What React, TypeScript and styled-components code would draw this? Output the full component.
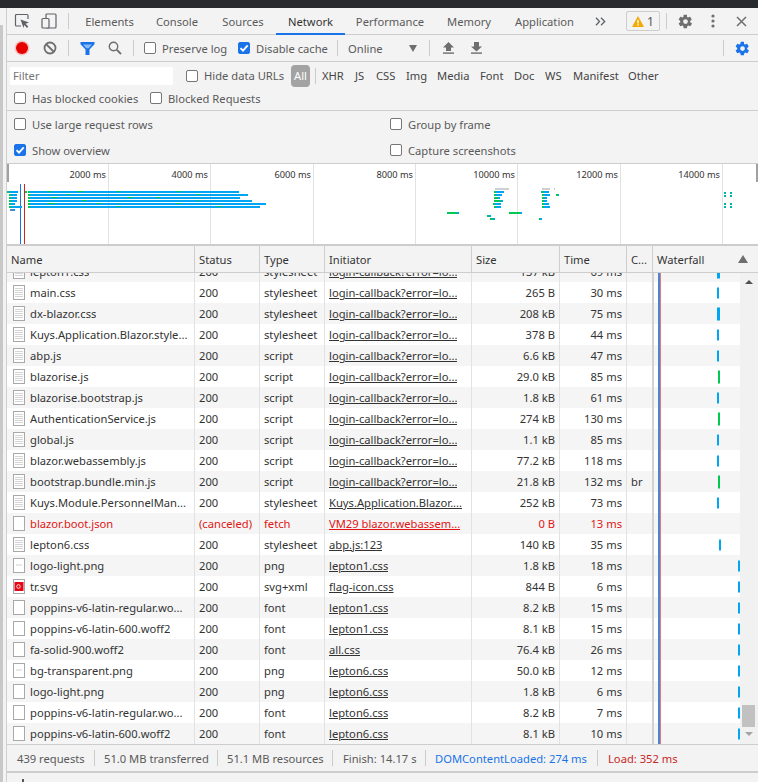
import React from "react";
import styled, { createGlobalStyle } from "styled-components";

const Global = createGlobalStyle`
  html, body { margin: 0; padding: 0; background: #f3f3f3; }
  body { font-family: "Noto Sans", "Open Sans", sans-serif; font-size: 11.2px; color: #333; overflow: hidden; }
  * { box-sizing: border-box; }
`;

const Shell = styled.div`
  width: 758px; height: 782px; display: flex; flex-direction: column; overflow: hidden; background: #f3f3f3;
`;
const DarkBar = styled.div`height: 8px; background: #292a2d; flex: none;`;
const Body = styled.div`flex: 1; display: flex; min-height: 0;`;
const Gutter = styled.div`
  width: 7px; flex: none; background: #f3f3f3; border-right: 1px solid #cfcfcf; padding-top: 17px;
`;
const GutterThumb = styled.div`width: 3px; height: 100%; background: #c8c8c8;`;
const Panel = styled.div`flex: 1; min-width: 0; display: flex; flex-direction: column;`;

const TabBar = styled.div`
  height: 27px; flex: none; display: flex; align-items: stretch; border-bottom: 1px solid #cdcdcd; padding-left: 5px;
`;
const IconSlot = styled.div<{ $w: number }>`
  width: ${p => p.$w}px; flex: none; display: flex; align-items: center; justify-content: center;
`;
const Sep = styled.div<{ $l?: number; $r?: number }>`
  width: 1px; height: 16px; background: #cbcbcb; align-self: center; flex: none;
  margin-left: ${p => p.$l ?? 0}px; margin-right: ${p => p.$r ?? 0}px;
`;
const Tab = styled.div<{ $on?: boolean; $w: number }>`
  width: ${p => p.$w}px; flex: none; display: flex; align-items: center; justify-content: center;
  color: ${p => (p.$on ? "#333" : "#5a5a5a")}; height: 27px; padding-top: 1px;
  border-bottom: 2px solid ${p => (p.$on ? "#1a73e8" : "transparent")};
`;
const Badge = styled.div`
  width: 34px; height: 20px; border: 1px solid #cdcdcd; border-radius: 2px; display: flex; align-items: center;
  justify-content: center; gap: 3px; align-self: center; flex: none; color: #555; font-size: 12px; margin-left: 12px;
`;
const Toolbar = styled.div`
  height: 27px; flex: none; display: flex; align-items: center; border-bottom: 1px solid #cdcdcd; padding: 0 6px 0 5px;
`;
const Check = styled.span<{ $on?: boolean }>`
  width: 12px; height: 12px; border-radius: 2px; flex: none; display: inline-flex; align-items: center; justify-content: center;
  background: ${p => (p.$on ? "#1a73e8" : "#fff")}; border: 1px solid ${p => (p.$on ? "#1a73e8" : "#767676")};
`;
const CheckLabel = styled.label<{ $w?: number }>`
  display: inline-flex; align-items: center; gap: 6px; color: #5a5a5a; white-space: nowrap; flex: none;
  width: ${p => (p.$w ? `${p.$w}px` : "auto")};
`;
const Spacer = styled.div`flex: 1;`;
const Select = styled.div`
  width: 69px; flex: none; display: flex; align-items: center; justify-content: space-between; color: #5a5a5a;
`;
const Caret = styled.span`
  width: 0; height: 0; border-left: 4px solid transparent; border-right: 4px solid transparent; border-top: 7px solid #6e6e6e;
`;
const FilterBar = styled.div`
  height: 49px; flex: none; border-bottom: 1px solid #cdcdcd; display: flex; flex-direction: column;
`;
const FilterTop = styled.div`height: 27px; display: flex; align-items: center; padding-left: 3px;`;
const FilterInput = styled.div`
  width: 163px; height: 18px; background: #fff; color: #757575; padding-left: 3px; line-height: 18px; flex: none; margin-right: 13px;
`;
const AllPill = styled.div`
  width: 19px; height: 22px; border-radius: 4px; background: #a3a3a3; color: #fff; display: flex; align-items: center; justify-content: center;
  margin-left: 6px; flex: none;
`;
const TypeLink = styled.span<{ $w: number }>`
  width: ${p => p.$w}px; flex: none; color: #444; white-space: nowrap;
`;
const FilterBottom = styled.div`height: 18px; display: flex; align-items: center; padding-left: 7px; gap: 10px;`;
const SettingsPane = styled.div`
  height: 53px; flex: none; border-bottom: 1px solid #cdcdcd; display: grid; grid-template-columns: 376px 1fr; grid-auto-rows: 26px;
  align-items: center; padding: 0 0 0 7px;
`;
const Overview = styled.div`
  height: 82px; flex: none; background: #fff; position: relative; border-bottom: 2px solid #cdcdcd;
`;
const OverviewSvg = styled.svg`display: block; position: absolute; inset: 0;`;
const TickLabel = styled.span<{ $r: number }>`
  position: absolute; top: 4px; right: ${p => p.$r}px; font-size: 9.2px; color: #333; white-space: nowrap;
`;
const EdgeHandle = styled.div`position: absolute; left: 0; top: 0; width: 2px; height: 18px; background: #a0a0a0;`;
const EdgeHandleRight = styled.div`position: absolute; right: 0; top: 0; width: 2px; height: 18px; background: #a0a0a0;`;

const COLS = "188px 65px 65px 147px 88px 67px 26px 1fr";
const HeaderRow = styled.div`
  height: 27px; flex: none; display: grid; grid-template-columns: ${COLS}; background: #f3f3f3; border-bottom: 1px solid #cdcdcd;
`;
const HeadCell = styled.div`
  display: flex; align-items: center; padding-left: 4px; border-right: 1px solid #cdcdcd; color: #333; justify-content: space-between;
  &:last-child { border-right: none; padding-right: 10px; }
`;
const SortUp = styled.span`
  width: 0; height: 0; border-left: 5px solid transparent; border-right: 5px solid transparent; border-bottom: 8px solid #6e6e6e;
`;
const TableWrap = styled.div`flex: 1; min-height: 0; position: relative; overflow: hidden; display: flex;`;
const Rows = styled.div`flex: 1; min-width: 0; margin-top: -12px;`;
const Row = styled.div<{ $alt: boolean; $err?: boolean }>`
  height: 21px; display: grid; grid-template-columns: 188px 65px 65px 147px 88px 67px 26px 1fr;
  background: ${p => (p.$alt ? "#f5f5f5" : "#fff")}; color: ${p => (p.$err ? "#e01515" : "#333")};
`;
const Cell = styled.div<{ $right?: boolean }>`
  display: flex; align-items: center; padding: 0 4px; border-right: 1px solid #e2e2e2; white-space: nowrap; overflow: hidden;
  justify-content: ${p => (p.$right ? "flex-end" : "flex-start")}; min-width: 0;
`;
const NameCell = styled(Cell)`gap: 5px; padding-left: 6px; padding-right: 2px;`;
const NameText = styled.span`overflow: hidden; white-space: nowrap;`;
const Link = styled.span`text-decoration: underline; overflow: hidden; white-space: nowrap;`;
const WaterCell = styled.div`position: relative; min-width: 0;`;
const WaterBar = styled.div`position: absolute; top: 50%; transform: translateY(-50%);`;
const GridEdge = styled.div`
  position: absolute; top: 0; bottom: 0; left: 645px; width: 2px; background: #d2d2d2;
`;
const TimeLines = styled.div`
  position: absolute; top: 0; bottom: 0; left: 651px; width: 3px; display: flex; pointer-events: none;
`;
const BlueLine = styled.div`width: 2px; background: #4e83cd;`;
const RedLine = styled.div`width: 1px; background: #e27b7b;`;
const Scrollbar = styled.div`
  width: 18px; flex: none; background: #f1f1f1; display: flex; flex-direction: column; align-items: center; justify-content: space-between; position: relative;
  padding: 7px 0 8px;
`;
const ScrollThumb = styled.div`
  position: absolute; left: 2px; width: 13px; top: 432px; height: 22px; background: #c1c1c1;
`;
const ArrowUp = styled.span`
  width: 0; height: 0; border-left: 4px solid transparent; border-right: 4px solid transparent; border-bottom: 4px solid #505050;
`;
const ArrowDown = styled.span`
  width: 0; height: 0; border-left: 4px solid transparent; border-right: 4px solid transparent; border-top: 4px solid #a3a3a3;
`;
const StatusBar = styled.div`
  height: 29px; flex: none; display: flex; align-items: center; border-top: 1px solid #cdcdcd; border-bottom: 2px solid #cdcdcd; padding-left: 10px;
`;
const StatusItem = styled.span<{ $c?: string; $w: number }>`
  white-space: nowrap; flex: none; width: ${p => p.$w}px; color: ${p => p.$c ?? "#5a5a5a"};
`;
const Drawer = styled.div`height: 9px; flex: none; padding: 6px 0 0 15px;`;
const DrawerDot = styled.div`width: 2px; height: 3px; background: #555;`;

const Inspect = () => (
  <svg width="16" height="16" viewBox="0 0 16 16" fill="none">
    <path d="M7 13H2.500a1 1 0 0 1-1-1V2.500a1 1 0 0 1 1-1H13a1 1 0 0 1 1 1V6" stroke="#5f6368" strokeWidth="1.200" />
    <path d="M6.500 6.500l8.500 3-3.400 1.200 2.700 2.900-1.300 1.300-2.700-2.900L9.500 15z" fill="#5f6368" />
  </svg>
);
const Device = () => (
  <svg width="16" height="16" viewBox="0 0 16 16" fill="none">
    <rect x="5" y="1" width="10" height="14" rx="1" stroke="#5f6368" strokeWidth="1.200" />
    <rect x="1" y="5.500" width="7" height="9.500" rx="1" fill="#f3f3f3" stroke="#5f6368" strokeWidth="1.200" />
  </svg>
);
const Record = () => (
  <svg width="16" height="16" viewBox="0 0 16 16">
    <circle cx="8" cy="8" r="7.600" fill="#f3c6c6" />
    <circle cx="8" cy="8" r="6" fill="#e60000" />
  </svg>
);
const Clear = () => (
  <svg width="14" height="14" viewBox="0 0 14 14" fill="none">
    <circle cx="7" cy="7" r="5.500" stroke="#6e6e6e" strokeWidth="1.800" />
    <path d="M3 3l8 8" stroke="#6e6e6e" strokeWidth="1.800" />
  </svg>
);
const Funnel = () => (
  <svg width="15" height="13" viewBox="0 0 15 13">
    <path d="M.5 0h14v2.300L9.500 7.500V13h-4V7.500L.5 2.300z" fill="#1a73e8" />
    <path d="M3 2.600h9L8.600 6.200H6.400z" fill="#8cbcf5" />
  </svg>
);
const Search = () => (
  <svg width="14" height="14" viewBox="0 0 14 14" fill="none">
    <circle cx="5.500" cy="5.500" r="4.200" stroke="#6e6e6e" strokeWidth="1.400" />
    <path d="M8.600 8.600L13 13" stroke="#6e6e6e" strokeWidth="1.800" />
  </svg>
);
const Upload = () => (
  <svg width="11" height="12" viewBox="0 0 11 12">
    <path d="M5.500 0L11 5.500H8V9H3V5.500H0z" fill="#6e6e6e" />
    <rect y="10.400" width="11" height="1.400" fill="#6e6e6e" />
  </svg>
);
const Download = () => (
  <svg width="11" height="12" viewBox="0 0 11 12">
    <path d="M3 0h5v4.500h3L5.500 9.500 0 4.500h3z" fill="#6e6e6e" />
    <rect y="10.400" width="11" height="1.400" fill="#6e6e6e" />
  </svg>
);
const Gear = ({ c }: { c: string }) => (
  <svg width="15" height="15" viewBox="0 0 24 24">
    <path
      fill={c}
      fillRule="evenodd"
      d="M19.400 13c.1-.3.1-.7.1-1s0-.7-.1-1l2.300-1.800c.2-.2.3-.4.1-.7l-2.200-3.800c-.1-.2-.4-.3-.7-.2l-2.700 1.100c-.6-.4-1.200-.8-1.800-1L14.400 1.700c0-.3-.3-.5-.5-.5H9.500c-.3 0-.5.2-.5.5l-.4 2.900c-.7.2-1.300.6-1.800 1L4.100 4.500c-.3-.1-.5 0-.7.2L1.200 8.500c-.1.300-.1.500.1.700L3.600 11c-.1.300-.1.700-.1 1s0 .7.1 1l-2.300 1.800c-.2.200-.3.400-.1.700l2.200 3.800c.1.200.4.300.7.200l2.700-1.100c.6.400 1.200.8 1.800 1l.4 2.900c0 .3.300.5.500.5h4.400c.3 0 .5-.2.500-.5l.4-2.900c.7-.2 1.300-.6 1.800-1l2.700 1.100c.3.100.5 0 .7-.2l2.200-3.800c.1-.3.100-.5-.1-.7zM12 15.800a3.800 3.800 0 1 1 0-7.600 3.800 3.800 0 0 1 0 7.600z"
    />
  </svg>
);
const Dots = () => (
  <svg width="4" height="14" viewBox="0 0 4 14">
    <circle cx="2" cy="2" r="1.600" fill="#6e6e6e" />
    <circle cx="2" cy="7" r="1.600" fill="#6e6e6e" />
    <circle cx="2" cy="12" r="1.600" fill="#6e6e6e" />
  </svg>
);
const Close = () => (
  <svg width="11" height="11" viewBox="0 0 11 11">
    <path d="M1 1l9 9M10 1l-9 9" stroke="#6e6e6e" strokeWidth="1.500" />
  </svg>
);
const More = () => (
  <svg width="11" height="9" viewBox="0 0 11 9" fill="none">
    <path d="M1 .8L4.500 4.500 1 8.200M6 .8l3.700 3.700L6 8.200" stroke="#5f6368" strokeWidth="1.300" />
  </svg>
);
const Warn = () => (
  <svg width="12" height="11" viewBox="0 0 12 11">
    <path d="M6 0l6 11H0z" fill="#f2a900" />
    <rect x="5.300" y="3.800" width="1.400" height="3.800" fill="#fff" />
    <rect x="5.300" y="8.300" width="1.400" height="1.400" fill="#fff" />
  </svg>
);
const Tick = () => (
  <svg width="10" height="10" viewBox="0 0 10 10" fill="none">
    <path d="M1.500 5.200L4 7.700 8.700 2.300" stroke="#fff" strokeWidth="1.800" />
  </svg>
);

type Kind = "doc" | "blank" | "flag" | "faint";
const FileIcon = ({ kind }: { kind: Kind }) => (
  <svg width="12" height="15" viewBox="0 0 12 15" style={{ flex: "none" }}>
    <rect x=".5" y=".5" width="11" height="14" fill="#fff" stroke="#a8a8a8" />
    {kind === "doc" &&
      [3, 5, 7, 9, 11].map(y => <rect key={y} x="2" y={y} width="8" height="1" fill="#d4d4d4" />)}
    {kind === "flag" && (
      <>
        <rect x="1.500" y="3" width="9" height="9" fill="#e30a17" />
        <circle cx="5.500" cy="7.500" r="1.800" fill="none" stroke="#fff" strokeWidth=".8" />
      </>
    )}
    {kind === "faint" && <rect x="3" y="6" width="6" height="2" fill="#e8e8e8" />}
  </svg>
);

const Checkbox = ({ on, label, w }: { on?: boolean; label: string; w?: number }) => (
  <CheckLabel $w={w}>
    <Check $on={on}>{on && <Tick />}</Check>
    {label}
  </CheckLabel>
);

type R = {
  name: string; status: string; type: string; init: string; size: string; time: string; c?: string;
  kind: Kind; x?: number; w?: number; h?: number; color?: string; err?: boolean;
};
const BLUE = "#00a6f4";
const GREEN = "#00c853";
const L = "login-callback?error=lo...";
const rows: R[] = [
  { name: "lepton1.css", status: "200", type: "stylesheet", init: L, size: "137 kB", time: "69 ms", kind: "doc", x: 64, w: 3, h: 13 },
  { name: "main.css", status: "200", type: "stylesheet", init: L, size: "265 B", time: "30 ms", kind: "doc", x: 64, w: 2, h: 11 },
  { name: "dx-blazor.css", status: "200", type: "stylesheet", init: L, size: "208 kB", time: "75 ms", kind: "doc", x: 64, w: 3, h: 13 },
  { name: "Kuys.Application.Blazor.style...", status: "200", type: "stylesheet", init: L, size: "378 B", time: "44 ms", kind: "doc", x: 64, w: 2, h: 11 },
  { name: "abp.js", status: "200", type: "script", init: L, size: "6.6 kB", time: "47 ms", kind: "doc", x: 64, w: 2, h: 11 },
  { name: "blazorise.js", status: "200", type: "script", init: L, size: "29.0 kB", time: "85 ms", kind: "doc", x: 65, w: 2, h: 13, color: GREEN },
  { name: "blazorise.bootstrap.js", status: "200", type: "script", init: L, size: "1.8 kB", time: "61 ms", kind: "doc", x: 64, w: 2, h: 11 },
  { name: "AuthenticationService.js", status: "200", type: "script", init: L, size: "274 kB", time: "130 ms", kind: "doc", x: 65, w: 2, h: 13, color: GREEN },
  { name: "global.js", status: "200", type: "script", init: L, size: "1.1 kB", time: "85 ms", kind: "doc", x: 64, w: 2, h: 11 },
  { name: "blazor.webassembly.js", status: "200", type: "script", init: L, size: "77.2 kB", time: "118 ms", kind: "doc", x: 64, w: 2, h: 11 },
  { name: "bootstrap.bundle.min.js", status: "200", type: "script", init: L, size: "21.8 kB", time: "132 ms", c: "br", kind: "doc", x: 65, w: 2, h: 13, color: GREEN },
  { name: "Kuys.Module.PersonnelMan...", status: "200", type: "stylesheet", init: "Kuys.Application.Blazor....", size: "252 kB", time: "73 ms", kind: "doc", x: 64, w: 2, h: 11 },
  { name: "blazor.boot.json", status: "(canceled)", type: "fetch", init: "VM29 blazor.webassem...", size: "0 B", time: "13 ms", kind: "blank", err: true },
  { name: "lepton6.css", status: "200", type: "stylesheet", init: "abp.js:123", size: "140 kB", time: "35 ms", kind: "doc", x: 66, w: 2, h: 11 },
  { name: "logo-light.png", status: "200", type: "png", init: "lepton1.css", size: "1.8 kB", time: "18 ms", kind: "faint", x: 85, w: 2, h: 11 },
  { name: "tr.svg", status: "200", type: "svg+xml", init: "flag-icon.css", size: "844 B", time: "6 ms", kind: "flag", x: 85, w: 2, h: 11 },
  { name: "poppins-v6-latin-regular.wo...", status: "200", type: "font", init: "lepton1.css", size: "8.2 kB", time: "15 ms", kind: "blank", x: 85, w: 2, h: 11 },
  { name: "poppins-v6-latin-600.woff2", status: "200", type: "font", init: "lepton1.css", size: "8.1 kB", time: "15 ms", kind: "blank", x: 85, w: 2, h: 11 },
  { name: "fa-solid-900.woff2", status: "200", type: "font", init: "all.css", size: "76.4 kB", time: "26 ms", kind: "blank", x: 85, w: 2, h: 11 },
  { name: "bg-transparent.png", status: "200", type: "png", init: "lepton6.css", size: "50.0 kB", time: "12 ms", kind: "faint", x: 85, w: 2, h: 11 },
  { name: "logo-light.png", status: "200", type: "png", init: "lepton6.css", size: "1.8 kB", time: "6 ms", kind: "blank", x: 85, w: 2, h: 11 },
  { name: "poppins-v6-latin-regular.wo...", status: "200", type: "font", init: "lepton6.css", size: "8.2 kB", time: "7 ms", kind: "blank", x: 85, w: 2, h: 11 },
  { name: "poppins-v6-latin-600.woff2", status: "200", type: "font", init: "lepton6.css", size: "8.1 kB", time: "10 ms", kind: "blank", x: 85, w: 2, h: 11 },
];

const tabs: [string, number, boolean?][] = [
  ["Elements", 69], ["Console", 66], ["Sources", 66], ["Network", 69, true], ["Performance", 90], ["Memory", 68], ["Application", 83],
];
const types: [string, number][] = [
  ["XHR", 33], ["JS", 21], ["CSS", 30], ["Img", 31], ["Media", 43], ["Font", 34], ["Doc", 31], ["WS", 28], ["Manifest", 55], ["Other", 40],
];
const gridX = [101, 203, 306, 408, 510, 613, 715];
const ticks: [string, number][] = [
  ["2000 ms", 652], ["4000 ms", 550], ["6000 ms", 447], ["8000 ms", 345], ["10000 ms", 243], ["12000 ms", 140], ["14000 ms", 38],
];
// [x, row, width, main colour] — row 0 sits at y=27, every row is 3px lower
const bars: [number, number, number, string][] = [
  [0, 0, 11, BLUE], [18, 0, 2, BLUE], [2, 1, 8, BLUE], [2, 2, 8, BLUE], [2, 3, 8, BLUE], [2, 4, 6, BLUE], [2, 5, 13, BLUE], [3, 6, 5, "#6b7fc4"],
  [21, 0, 211, BLUE], [21, 1, 220, BLUE], [21, 2, 212, BLUE], [21, 3, 224, BLUE], [21, 4, 238, BLUE], [21, 5, 232, BLUE],
  [487, 0, 10, BLUE], [487, 1, 8, BLUE], [487, 2, 6, GREEN], [487, 3, 9, GREEN], [486, 4, 8, BLUE], [487, 5, 7, BLUE],
  [534, 0, 8, BLUE], [535, 1, 8, BLUE], [535, 2, 5, BLUE], [535, 3, 5, BLUE], [535, 4, 7, BLUE], [535, 5, 8, BLUE], [549, 1, 3, BLUE],
  [440, 7, 12, GREEN], [502, 7, 13, GREEN], [480, 8, 4, GREEN], [483, 9, 5, GREEN], [532, 9, 3, GREEN],
];
const speckles: [number, number, number][] = [
  [40, 0, 4], [70, 0, 6], [110, 0, 3], [170, 0, 4], [60, 1, 3], [190, 1, 3], [45, 2, 5], [120, 2, 6], [150, 2, 3],
  [75, 3, 4], [190, 3, 2], [40, 4, 8], [90, 4, 4], [170, 4, 3], [110, 5, 3], [210, 5, 4],
];
const greys: [number, number][] = [[488, 14], [535, 8], [547, 1]];
const dots: [number, number][] = [[717, 28], [723, 28], [717, 31], [723, 31], [717, 39], [723, 39], [717, 42], [723, 42]];

export default function App() {
  return (
    <Shell>
      <Global />
      <DarkBar />
      <Body>
        <Gutter><GutterThumb /></Gutter>
        <Panel>
          <TabBar>
            <IconSlot $w={20}><Inspect /></IconSlot>
            <IconSlot $w={34}><Device /></IconSlot>
            <Sep $l={2} $r={6} />
            {tabs.map(([t, w, on]) => <Tab key={t} $w={w} $on={on}>{t}</Tab>)}
            <IconSlot $w={28}><More /></IconSlot>
            <Badge><Warn />1</Badge>
            <Sep $l={6} $r={4} />
            <IconSlot $w={28}><Gear c="#6e6e6e" /></IconSlot>
            <IconSlot $w={28}><Dots /></IconSlot>
            <IconSlot $w={28}><Close /></IconSlot>
          </TabBar>
          <Toolbar>
            <IconSlot $w={20}><Record /></IconSlot>
            <IconSlot $w={36}><Clear /></IconSlot>
            <Sep />
            <IconSlot $w={36}><Funnel /></IconSlot>
            <IconSlot $w={20}><Search /></IconSlot>
            <Sep $l={8} $r={10} />
            <Checkbox label="Preserve log" w={94} />
            <Checkbox on label="Disable cache" w={90} />
            <Sep $l={9} $r={10} />
            <Select>Online<Caret /></Select>
            <Sep $l={12} $r={4} />
            <IconSlot $w={28}><Upload /></IconSlot>
            <IconSlot $w={28}><Download /></IconSlot>
            <Spacer />
            <Sep $r={8} />
            <IconSlot $w={20}><Gear c="#1a73e8" /></IconSlot>
          </Toolbar>
          <FilterBar>
            <FilterTop>
              <FilterInput>Filter</FilterInput>
              <Checkbox label="Hide data URLs" w={99} />
              <AllPill>All</AllPill>
              <Sep $l={5} $r={6} />
              {types.map(([t, w]) => <TypeLink key={t} $w={w}>{t}</TypeLink>)}
            </FilterTop>
            <FilterBottom>
              <Checkbox label="Has blocked cookies" w={126} />
              <Checkbox label="Blocked Requests" />
            </FilterBottom>
          </FilterBar>
          <SettingsPane>
            <Checkbox label="Use large request rows" />
            <Checkbox label="Group by frame" />
            <Checkbox on label="Show overview" />
            <Checkbox label="Capture screenshots" />
          </SettingsPane>
          <Overview>
            <OverviewSvg width="751" height="80" viewBox="0 0 751 80" shapeRendering="crispEdges">
              {gridX.map(x => <rect key={x} x={x} y="0" width="1" height="80" fill="#e2e2e2" />)}
              <rect x="13" y="20" width="1" height="60" fill="#1a73e8" />
              <rect x="17" y="20" width="1" height="60" fill="#c62828" />
              {greys.map(([x, w]) => <rect key={x} x={x} y="24" width={w} height="2" fill="#d0d0d0" />)}
              {bars.map(([x, r, w, c], i) => (
                <g key={i}>
                  <rect x={x} y={27 + r * 3} width={w} height="2" fill={c} />
                  <rect x={c === BLUE ? x : x + w - 2} y={27 + r * 3} width={2} height="2" fill={c === BLUE ? GREEN : BLUE} />
                </g>
              ))}
              {speckles.map(([x, r, w], i) => <rect key={i} x={x} y={27 + r * 3} width={w} height="1" fill={GREEN} />)}
              {dots.map(([x, y], i) => <rect key={i} x={x} y={y} width="2" height="2" fill="#00b8a0" />)}
            </OverviewSvg>
            {ticks.map(([t, r]) => <TickLabel key={t} $r={r}>{t}</TickLabel>)}
            <EdgeHandle />
            <EdgeHandleRight />
          </Overview>
          <HeaderRow>
            <HeadCell>Name</HeadCell>
            <HeadCell>Status</HeadCell>
            <HeadCell>Type</HeadCell>
            <HeadCell>Initiator</HeadCell>
            <HeadCell>Size</HeadCell>
            <HeadCell>Time</HeadCell>
            <HeadCell>C...</HeadCell>
            <HeadCell>Waterfall<SortUp /></HeadCell>
          </HeaderRow>
          <TableWrap>
            <Rows>
              {rows.map((r, i) => (
                <Row key={i} $alt={i % 2 === 0} $err={r.err}>
                  <NameCell><FileIcon kind={r.kind} /><NameText>{r.name}</NameText></NameCell>
                  <Cell>{r.status}</Cell>
                  <Cell>{r.type}</Cell>
                  <Cell><Link>{r.init}</Link></Cell>
                  <Cell $right>{r.size}</Cell>
                  <Cell $right>{r.time}</Cell>
                  <Cell>{r.c ?? ""}</Cell>
                  <WaterCell>
                    {r.x !== undefined && (
                      <WaterBar style={{ left: r.x, width: r.w, height: r.h, background: r.color ?? BLUE }} />
                    )}
                  </WaterCell>
                </Row>
              ))}
            </Rows>
            <GridEdge />
            <TimeLines><BlueLine /><RedLine /></TimeLines>
            <Scrollbar>
              <ArrowUp />
              <ScrollThumb />
              <ArrowDown />
            </Scrollbar>
          </TableWrap>
          <StatusBar>
            <StatusItem $w={77}>439 requests</StatusItem>
            <Sep $r={9} />
            <StatusItem $w={113}>51.0 MB transferred</StatusItem>
            <Sep $r={9} />
            <StatusItem $w={105}>51.1 MB resources</StatusItem>
            <Sep $r={10} />
            <StatusItem $w={82}>Finish: 14.17 s</StatusItem>
            <Sep $r={9} />
            <StatusItem $w={162} $c="#1a73e8">DOMContentLoaded: 274 ms</StatusItem>
            <Sep $r={10} />
            <StatusItem $w={70} $c="#c62828">Load: 352 ms</StatusItem>
          </StatusBar>
          <Drawer><DrawerDot /></Drawer>
        </Panel>
      </Body>
    </Shell>
  );
}
